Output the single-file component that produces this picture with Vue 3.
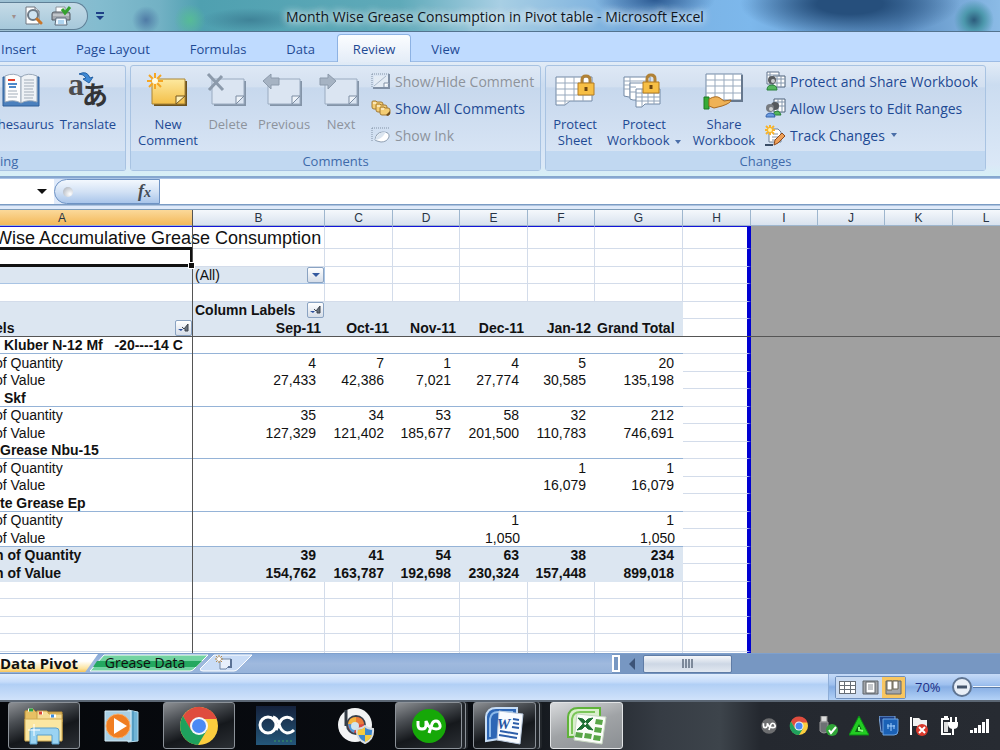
<template>
  <div class="excel">
    <header class="titlebar">
      <div class="quick">
        <span class="quick-dim">▾</span>
        <button class="bare" aria-label="Print preview">
          <svg width="20" height="20" viewBox="0 0 20 20">
            <path d="M3 1h9l4 4v13H3z" fill="#fff" stroke="#707780" />
            <path d="M12 1v4h4" fill="#d5dbe2" stroke="#707780" />
            <circle cx="10" cy="9" r="5" fill="#cfe3f1" stroke="#6d7a86" stroke-width="2" />
            <path d="M14 13l4 4" stroke="#c8762b" stroke-width="3" stroke-linecap="round" />
          </svg>
        </button>
        <button class="bare" aria-label="Quick print">
          <svg width="22" height="20" viewBox="0 0 22 20">
            <path d="M6 1h9v7H6z" fill="#fff" stroke="#8a929b" />
            <path d="M2 8q0-2 2-2h14q2 0 2 2v6H2z" fill="#a3a8ae" stroke="#555b62" />
            <path d="M3 9h16" stroke="#dfe3e6" />
            <path d="M6 12h10l1 7H5z" fill="#eef7ff" stroke="#5c6b7a" />
            <path d="M8 15h6M8 17h6" stroke="#6fb0df" />
            <path d="M12 3l3 4 5-6" fill="none" stroke="#35a12e" stroke-width="3" />
          </svg>
        </button>
      </div>
      <button class="bare customize" aria-label="Customize toolbar">
        <svg width="8" height="8" viewBox="0 0 8 8">
          <path d="M0 1h8" stroke="#1d3f86" stroke-width="2" />
          <path d="M0 4h8L4 8z" fill="#1d3f86" />
        </svg>
      </button>
      <h1 class="window-title">Month Wise Grease Consumption in Pivot table - Microsoft Excel</h1>
    </header>

    <nav class="tabs">
      <button
        v-for="tab in tabs"
        :key="tab"
        class="tab"
        :class="{ active: tab === activeTab }"
        @click="activeTab = tab"
      >
        {{ tab }}
      </button>
    </nav>

    <section class="ribbon">
      <div class="group group-proofing">
        <div class="group-body">
          <button class="big thesaurus">
            <svg width="38" height="36" viewBox="0 0 38 36">
              <path d="M1 4h36v29H1z" fill="#4b80bd" stroke="#2f5f99" />
              <path d="M3 3q9-4 16 1v26q-7-4-16-1z" fill="#fdfdfd" stroke="#9aa9ba" />
              <path d="M35 3q-9-4-16 1v26q7-4 16-1z" fill="#eef2f6" stroke="#9aa9ba" />
              <path d="M6 7h7" stroke="#e2402c" stroke-width="2" />
              <path d="M6 11h9M7 14h7" stroke="#4d88c9" stroke-width="2" />
              <path d="M6 18h9M6 21h10M6 24h9M22 7h10M22 10h10M22 13h10M22 16h9M22 19h10M22 22h10M22 25h9" stroke="#a2adb9" />
            </svg>
            <span>hesaurus</span>
          </button>
          <button class="big translate">
            <svg width="42" height="38" viewBox="0 0 42 38">
              <text x="1" y="23" class="glyph-a">a</text>
              <text x="15" y="33" class="glyph-ja">あ</text>
              <path d="M12 2q8-4 11 4l3-1-4 6-6-4 3-1q-2-4-7-4z" fill="#3f8ad6" stroke="#2361a5" />
            </svg>
            <span>Translate</span>
          </button>
        </div>
        <div class="group-name">ing</div>
      </div>

      <div class="group group-comments">
        <div class="group-body">
          <button class="big new-comment">
            <svg width="42" height="36" viewBox="0 0 42 36">
              <path d="M7 8h33v25H7z" fill="#6b5220" />
              <path d="M5 6h33v25H5z" fill="url(#note)" stroke="#a98536" />
              <path d="M29 31v-8h9z" fill="#fff2ba" stroke="#74571f" />
              <path d="M8 0v16M0 8h16M2 2l12 12M14 2L2 14" stroke="#f5a623" stroke-width="2" />
              <circle cx="8" cy="8" r="3" fill="#fffbe0" />
              <defs>
                <linearGradient id="note" x2="0" y2="1">
                  <stop offset="0" stop-color="#fde9a0" />
                  <stop offset="1" stop-color="#f3bf48" />
                </linearGradient>
              </defs>
            </svg>
            <span>New<br />Comment</span>
          </button>
          <button v-for="item in noteButtons" :key="item.label" class="big" :class="item.cls" disabled>
            <svg width="42" height="36" viewBox="0 0 42 36">
              <path d="M7 8h32v25H7z" fill="#8494a8" />
              <path d="M5 6h32v25H5z" fill="#dbe5f2" stroke="#9aabc0" />
              <path d="M29 31v-8h8z" fill="#eef3f9" stroke="#7c8da3" />
              <path :d="item.mark" :fill="item.fill" stroke="#8c9aab" :stroke-width="item.stroke" />
            </svg>
            <span>{{ item.label }}</span>
          </button>
          <div class="small-list">
            <button class="small" disabled>
              <svg width="20" height="18" viewBox="0 0 20 18">
                <path d="M1 2h17" stroke="#8192a6" stroke-dasharray="1 1" />
                <path d="M1 2v13" stroke="#8192a6" stroke-dasharray="1 1" />
                <path d="M3 4h15v11H3z" fill="#e3ebf4" />
                <path d="M18 2v14H2" fill="none" stroke="#8090a5" stroke-width="2" />
                <path d="M3 14L15 4" stroke="#a9b8ca" />
                <path d="M13 15v-4h5" fill="#fff" stroke="#8090a5" />
              </svg>
              Show/Hide Comment
            </button>
            <button class="small">
              <svg width="20" height="18" viewBox="0 0 20 18">
                <g fill="#f4cd73" stroke="#a37a35">
                  <path d="M1 3q0-1 1-1h3l1 1h4q2 0 2 2v4q0 1-1 1H3q-2 0-2-2z" />
                  <path d="M5 6q0-1 1-1h3l1 1h4q2 0 2 2v4q0 1-1 1H7q-2 0-2-2z" />
                  <path d="M9 9q0-1 1-1h3l1 1h3q2 0 2 2v3q0 2-2 2h-6q-2 0-2-2z" />
                </g>
                <path d="M2 4h3M6 7h3M10 10h3" stroke="#fff" />
                <path d="M15 16l4-4v3l-2 2z" fill="#704d1b" />
              </svg>
              Show All Comments
            </button>
            <button class="small" disabled>
              <svg width="20" height="18" viewBox="0 0 20 18">
                <path d="M1 2h18M1 2v14" fill="none" stroke="#8192a6" stroke-dasharray="1 1" />
                <path d="M4 14q1-8 8-8 7 0 6 5-2 5-8 5l-4-1z" fill="#fff" stroke="#8f9fb2" />
                <path d="M4 14q6 0 11-8-8-1-11 8z" fill="#dbe5f0" />
              </svg>
              Show Ink
            </button>
          </div>
        </div>
        <div class="group-name">Comments</div>
      </div>

      <div class="group group-changes">
        <div class="group-body">
          <button class="big protect-sheet">
            <svg width="42" height="38" viewBox="0 0 42 38">
              <path d="M2 5h36v24H16l-5 4H2z" fill="#fff" stroke="#7289a5" />
              <path d="M2 11h36M2 17h36M2 23h36M2 29h14M11 5v28M20 5v24M29 5v24" stroke="#98a9bd" />
              <g transform="translate(24 2)">
                <path d="M4 10V6q0-4 4-4t4 4v4" fill="none" stroke="#b08136" stroke-width="3" />
                <path d="M0 9h16v12H0z" fill="#f7bf45" stroke="#b27a22" />
                <path d="M8 13v4" stroke="#6c4612" stroke-width="3" />
              </g>
            </svg>
            <span>Protect<br />Sheet</span>
          </button>
          <button class="big protect-book">
            <svg width="42" height="38" viewBox="0 0 42 38">
              <path d="M1 5h26v20H6l-5-1z" fill="#fff" stroke="#7289a5" />
              <path d="M1 9h26M1 13h26M1 17h26M7 5v19" stroke="#98a9bd" />
              <path d="M7 11h26v17H10l-3-1z" fill="#fff" stroke="#7289a5" />
              <path d="M13 17h24v15H22l-3 3h-6z" fill="#fff" stroke="#7289a5" />
              <path d="M7 15h6M7 20h6M13 21h24M13 25h24M13 29h24M19 17v18M25 17v15M31 17v15" stroke="#8fa2b8" />
              <g transform="translate(20 1)">
                <path d="M4 10V6q0-4 4-4t4 4v4" fill="none" stroke="#b08136" stroke-width="3" />
                <path d="M0 9h16v11H0z" fill="#f7bf45" stroke="#b27a22" />
                <path d="M8 12v4" stroke="#6c4612" stroke-width="3" />
              </g>
            </svg>
            <span>Protect<br />Workbook <i class="caret"></i></span>
          </button>
          <button class="big share-book">
            <svg width="42" height="38" viewBox="0 0 42 38">
              <path d="M3 2h36v26H3z" fill="#fff" stroke="#7289a5" />
              <path d="M3 8h36M3 14h36M3 21h36M12 2v26M21 2v26M30 2v26" stroke="#98a9bd" />
              <path d="M39 3v26H27" fill="none" stroke="#66788e" stroke-width="2" />
              <path d="M1 25h5v12H1z" fill="#35ab35" stroke="#1c7a23" />
              <path d="M6 27q7-4 11-1l4 3 7-1q0 3-9 6l-8 2-5-2z" fill="#efb256" stroke="#a86a21" />
            </svg>
            <span>Share<br />Workbook</span>
          </button>
          <div class="small-list changes-list">
            <button class="small">
              <svg width="21" height="20" viewBox="0 0 21 20">
                <path d="M2 1h12v12H2z" fill="#fff" stroke="#62758c" />
                <path d="M8 5h12v11H8z" fill="#fff" stroke="#4d6179" />
                <path d="M2 4h12M5 1v12M8 8h12M8 12h12M12 5v11M16 5v11" stroke="#8497ad" />
                <circle cx="7" cy="9" r="4" fill="#5a5d60" />
                <circle cx="8" cy="10" r="2" fill="#c9ccce" />
                <path d="M2 19q0-5 5-5t5 5z" fill="#55b75d" stroke="#28803a" />
              </svg>
              Protect and Share Workbook
            </button>
            <button class="small">
              <svg width="21" height="20" viewBox="0 0 21 20">
                <path d="M9 1h11v13H9z" fill="#fff" stroke="#4d6179" />
                <path d="M9 4h11M9 8h11M13 1v13M17 1v13" stroke="#8497ad" />
                <circle cx="10" cy="8" r="4" fill="#55595d" />
                <circle cx="5" cy="10" r="4" fill="#777b80" />
                <circle cx="6" cy="11" r="2" fill="#d0d2d4" />
                <path d="M8 17q1-4 4-4t4 4z" fill="#55b75d" stroke="#28803a" />
                <path d="M1 19q0-4 5-4 4 0 4 4z" fill="#6a9be0" stroke="#3562ab" />
              </svg>
              Allow Users to Edit Ranges
            </button>
            <button class="small">
              <svg width="21" height="21" viewBox="0 0 21 21">
                <path d="M4 4h9l3 3v10H4z" fill="#fff" stroke="#718196" />
                <path d="M8 9h5M7 12h6M7 15h5" stroke="#8595a8" />
                <path d="M5 0v10M0 5h10M1 1l8 8M9 1L1 9" stroke="#f7b32b" stroke-width="2" />
                <circle cx="5" cy="5" r="2" fill="#fff3b0" />
                <path d="M17 8l3 3-7 7-4 2 1-5z" fill="#eea058" stroke="#8d4a1d" />
                <path d="M0 20h8" stroke="#3a4d66" stroke-width="2" />
              </svg>
              Track Changes <i class="caret"></i>
            </button>
          </div>
        </div>
        <div class="group-name">Changes</div>
      </div>
    </section>

    <section class="formula-bar">
      <div class="name-box">
        <svg width="10" height="6" viewBox="0 0 10 6"><path d="M0 0h10L5 5z" fill="#111" /></svg>
      </div>
      <div class="fx-pill">
        <span class="knob"></span>
        <span class="fx">f<small>x</small></span>
      </div>
      <input class="formula" type="text" aria-label="Formula bar" />
    </section>

    <main class="sheet">
      <table>
        <colgroup>
          <col v-for="c in columns" :key="c.name" :class="c.cls" />
        </colgroup>
        <thead>
          <tr>
            <th v-for="c in columns" :key="c.name" :class="{ selected: c.name === 'A' }">{{ c.name }}</th>
          </tr>
        </thead>
        <tbody>
          <tr class="title-row">
            <td colspan="2" class="sheet-title">Wise Accumulative Grease Consumption</td>
            <td v-for="n in 5" :key="n"></td>
            <td class="edge"></td>
            <td class="outside" colspan="4" rowspan="25"></td>
          </tr>
          <tr v-for="(row, i) in rows" :key="i" :class="row.kind">
            <td :class="[row.indent, { cursor: i === 0 }]">
              <div class="cell">
                <span>{{ row.label }}</span>
                <button v-if="row.filterA" class="filter" aria-label="Filter rows">
                  <svg width="11" height="10" viewBox="0 0 11 10">
                    <path d="M0 6h5L3 8z" fill="#2a4f9c" />
                    <path d="M4 4l2 2 4-5v7H7V6" fill="#68717c" stroke="#3c444d" />
                  </svg>
                </button>
              </div>
              <i v-if="i === 0" class="handle"></i>
            </td>
            <td v-for="(v, j) in row.values" :key="j" :class="{ left: row.left || v === 'Grand Total' }">
              <div class="cell">
                <span>{{ v }}</span>
                <button v-if="row.filterB && j === 0" class="filter" aria-label="Filter">
                  <svg v-if="row.kind === 'page-filter'" width="8" height="4" viewBox="0 0 8 4">
                    <path d="M0 0h8L4 4z" fill="#33599f" />
                  </svg>
                  <svg v-else width="11" height="10" viewBox="0 0 11 10">
                    <path d="M0 6h5L3 8z" fill="#2a4f9c" />
                    <path d="M4 4l2 2 4-5v7H7V6" fill="#68717c" stroke="#3c444d" />
                  </svg>
                </button>
              </div>
            </td>
            <td class="edge"></td>
          </tr>
        </tbody>
      </table>
      <div class="freeze-v"></div>
      <div class="freeze-h"></div>
    </main>

    <footer class="sheet-tabs">
      <button class="sheet-tab current">Data Pivot</button>
      <button class="sheet-tab green">
        <svg class="shape" width="118" height="18" viewBox="0 0 118 18" preserveAspectRatio="none">
          <path d="M0 17L14 1h104L104 15q-2 2-4 2z" fill="#72d3a1" stroke="#fff" />
          <path d="M7 7h105l-6 6H3z" fill="#24a860" />
        </svg>
        <span>Grease Data</span>
      </button>
      <button class="sheet-tab insert" aria-label="Insert worksheet">
        <svg width="54" height="18" viewBox="0 0 54 18">
          <path d="M0 15L14 1h38L38 15q-2 2-4 2H3q-3 0-3-2z" fill="#c9dcf6" stroke="#fff" />
          <path d="M20 5h11v8h-3l-2 2h-6z" fill="#e8f0fb" stroke="#7388a6" />
          <path d="M31 5v8h-3" fill="none" stroke="#5b7295" stroke-width="2" />
          <path d="M19 1v8M15 5h8M16 2l6 6M22 2l-6 6" stroke="#b98a45" />
          <circle cx="19" cy="5" r="2" fill="#fff" />
        </svg>
      </button>
      <div class="hscroll">
        <span class="splitter"></span>
        <button class="arrow" aria-label="Scroll left">
          <svg width="6" height="12" viewBox="0 0 6 12"><path d="M6 0v12L0 6z" fill="#3d5478" /></svg>
        </button>
        <div class="thumb"><i></i><i></i><i></i><i></i></div>
      </div>
    </footer>

    <section class="status">
      <div class="status-left"></div>
      <div class="status-right">
        <div class="views">
          <button aria-label="Normal view">
            <svg width="17" height="13" viewBox="0 0 17 13">
              <path d="M0 0h17v13H0z" fill="#666d75" />
              <path d="M1 1h4v3H1zM6 1h5v3H6zM12 1h4v3h-4zM1 5h4v3H1zM6 5h5v3H6zM12 5h4v3h-4zM1 9h4v3H1zM6 9h5v3H6zM12 9h4v3h-4z" fill="#fff" />
            </svg>
          </button>
          <button aria-label="Page layout view">
            <svg width="17" height="15" viewBox="0 0 17 15">
              <path d="M1 1h15v13H1z" fill="#a3a6aa" stroke="#5e646b" />
              <path d="M4 2h9v11H4z" fill="#fff" stroke="#5e646b" />
              <path d="M6 5h5M6 7h5M6 9h5" stroke="#888e95" />
            </svg>
          </button>
          <button class="on" aria-label="Page break preview">
            <svg width="17" height="15" viewBox="0 0 17 15">
              <path d="M1 1h15v13H1z" fill="#a3a6aa" stroke="#5e646b" />
              <path d="M2 1h5v9H2zM8 1h5v8H8z" fill="#fff" stroke="#6d6652" />
            </svg>
          </button>
        </div>
        <span class="percent">70%</span>
        <button class="bare zoom-out" aria-label="Zoom out">
          <svg width="22" height="22" viewBox="0 0 22 22">
            <circle cx="11" cy="11" r="9" fill="#e9eff7" stroke="#5f7491" stroke-width="2" />
            <path d="M6 11h10" stroke="#44546b" stroke-width="3" />
          </svg>
        </button>
        <span class="track"></span>
      </div>
    </section>

    <section class="taskbar">
      <button class="task open" aria-label="File Explorer">
        <svg width="42" height="38" viewBox="0 0 42 38">
          <path d="M2 4l8-2 3 3h26v28H2z" fill="#e8c063" stroke="#b98d36" />
          <path d="M14 4h10l2 3h13v8H14z" fill="#f5dc94" stroke="#c79f47" />
          <path d="M5 3h5M16 6h4M27 9h6" stroke="#fff" stroke-width="3" />
          <path d="M6 3h4" stroke="#30a243" stroke-width="3" />
          <path d="M16 6h3" stroke="#db4337" stroke-width="3" />
          <path d="M28 9h3" stroke="#3b8de0" stroke-width="3" />
          <path d="M2 12h37v22H2z" fill="#fbe7a2" stroke="#d2ab53" />
          <path d="M7 37V24q0-3 3-3h23q3 0 3 3v13h-7v-9H14v9z" fill="#9ad3f2" stroke="#5b9fca" />
          <path d="M11 17v12M5 23h12" stroke="#fff" />
        </svg>
      </button>
      <button class="task player" aria-label="Media Player">
        <svg width="36" height="34" viewBox="0 0 36 34">
          <path d="M24 1l10 2v29l-10 1z" fill="#70b4d6" stroke="#b5dcee" />
          <path d="M29 2v30" stroke="#3b86b0" />
          <path d="M1 2h26v30H1z" fill="#a9cfe4" stroke="#d5ebf6" />
          <circle cx="14" cy="17" r="12" fill="#f07e22" stroke="#f6b070" />
          <path d="M10 9v16l13-8z" fill="#fff" />
        </svg>
      </button>
      <button class="task open" aria-label="Chrome">
        <svg width="40" height="40" viewBox="0 0 40 40">
          <circle cx="20" cy="20" r="19" fill="#fbcd3e" />
          <path d="M38 13H20L12 25 4 10A19 19 0 0 1 38 13z" fill="#df4c3e" />
          <path d="M4 10A19 19 0 0 0 19 39l9-15H12z" fill="#1fa15d" />
          <circle cx="20" cy="20" r="9" fill="#f4f6f8" />
          <circle cx="20" cy="20" r="7" fill="#4a8af4" />
        </svg>
      </button>
      <button class="task oc" aria-label="OC">
        <svg width="40" height="39" viewBox="0 0 40 39">
          <defs>
            <linearGradient id="oc" x2="0" y2="1">
              <stop offset="0" stop-color="#15223c" />
              <stop offset="1" stop-color="#24577a" />
            </linearGradient>
          </defs>
          <path d="M0 0h40v39H0z" fill="url(#oc)" />
          <circle cx="12" cy="19" r="8" fill="none" stroke="#fff" stroke-width="3" />
          <path d="M17 11q4 1 6 7 2 8 8 9 4 0 7-3M37 14q-4-4-9-2-3 1-5 6l-3 6" fill="none" stroke="#fff" stroke-width="3" />
          <path d="M18 35h19" stroke="#3c9b61" stroke-dasharray="2 2" />
        </svg>
      </button>
      <button class="task camera" aria-label="Camera">
        <svg width="38" height="38" viewBox="0 0 38 38">
          <circle cx="18" cy="18" r="17" fill="#f3f4f5" />
          <path d="M9 3v16" stroke="#323b45" stroke-width="3" />
          <circle cx="19" cy="18" r="10" fill="#39424c" />
          <circle cx="19" cy="18" r="8" fill="#d94740" />
          <path d="M19 18l-8-1q1-7 8-7z" fill="#f4b43c" />
          <path d="M19 18v-8q7 0 8 7z" fill="#e97c3c" />
          <path d="M19 18l-8-1q1 7 6 9z" fill="#4d98d9" />
          <circle cx="18" cy="19" r="4" fill="#d1e5ee" />
          <path d="M20 22q5 0 8-3 3 3 8 3 1 10-8 14-9-4-8-14z" fill="#3f87cd" stroke="#d9dde0" stroke-width="2" />
          <path d="M28 20v8h-7q-1-2 0-5 4 0 7-3zM28 28h7q-2 5-7 7z" fill="#f5cb42" />
        </svg>
      </button>
      <button class="task open stack" aria-label="Upwork">
        <svg width="36" height="36" viewBox="0 0 36 36">
          <circle cx="18" cy="18" r="17" fill="#16a808" />
          <path d="M7 13v4q0 4 4 4t4-4v-4q2 5 5 8M18 25l3-9q1-3 4-3t4 4-4 4q-3 0-5-2" fill="none" stroke="#fff" stroke-width="3" />
        </svg>
      </button>
      <button class="task open stack word" aria-label="Word">
        <svg width="40" height="38" viewBox="0 0 40 38">
          <path d="M1 34V10Q2 1 11 1h21v28z" fill="#2d66b5" stroke="#c7ddf5" stroke-width="2" />
          <path d="M5 30V12q1-7 8-7h15" fill="none" stroke="#8bb9e9" stroke-width="2" />
          <path d="M14 4l24 3-3 30-23-4z" fill="#f8fbff" stroke="#b8c8dc" />
          <text x="12" y="22" class="word-w">W</text>
          <path d="M28 12l6 1M28 16l6 1M27 20l7 1M15 24l18 3M14 28l18 3" stroke="#2c5da9" stroke-width="2" />
        </svg>
      </button>
      <button class="task open bright" aria-label="Excel">
        <svg width="40" height="38" viewBox="0 0 40 38">
          <path d="M1 30V10Q2 1 11 1h22v28z" fill="#d9efcb" stroke="#5fb33a" stroke-width="2" />
          <path d="M5 27V12q1-7 8-7h15" fill="none" stroke="#7cc65a" stroke-width="2" />
          <path d="M10 7l29 3-4 27-28-4z" fill="#fafdf8" stroke="#c7d6c2" />
          <path d="M29 12l7 1-1 5-7-1zM28 20l7 1-1 5-7-1zM27 28l7 1-1 5-7-1zM18 26l7 1-1 5-7-1zM9 25l7 1-1 5-7-1z" fill="#59a647" />
          <path d="M11 11l5 1 10 11-5-1zM26 11l-5 1-11 11 5-1z" fill="#1f7034" stroke="#1f7034" />
        </svg>
      </button>
      <div class="tray">
        <svg width="20" height="20" viewBox="0 0 36 36">
          <circle cx="18" cy="18" r="14" fill="#6d6e70" />
          <path d="M8 13v4q0 4 3 4t4-4v-4q2 5 5 8M18 25l3-9q1-3 4-3t4 4-4 4q-3 0-5-2" fill="none" stroke="#fff" stroke-width="3" />
        </svg>
        <svg width="20" height="20" viewBox="0 0 40 40">
          <circle cx="20" cy="20" r="18" fill="#fbcd3e" />
          <path d="M37 13H20L12 25 4 11A18 18 0 0 1 37 13z" fill="#df4c3e" />
          <path d="M4 11A18 18 0 0 0 20 38l8-13H12z" fill="#1fa15d" />
          <circle cx="20" cy="20" r="9" fill="#f4f6f8" />
          <circle cx="20" cy="20" r="7" fill="#4a8af4" />
        </svg>
        <svg width="20" height="20" viewBox="0 0 20 20">
          <path d="M2 0h6v6H2z" fill="#ddd" stroke="#888" />
          <path d="M1 6h8v9q-4 4-8 0z" fill="#6d7174" stroke="#999" />
          <circle cx="13" cy="14" r="6" fill="#2fa437" />
          <path d="M10 14l2 3 5-6" fill="none" stroke="#fff" stroke-width="2" />
        </svg>
        <svg width="20" height="20" viewBox="0 0 20 20">
          <path d="M10 0l10 19H0z" fill="#22cc22" stroke="#0a8a15" />
          <path d="M10 8l-4 8h8z" fill="#0b6612" />
          <path d="M10 11v3l4 1" fill="none" stroke="#8bff7e" stroke-width="2" />
        </svg>
        <svg width="20" height="20" viewBox="0 0 20 20">
          <path d="M0 0h16v16H2z" fill="#1b3f86" stroke="#7ea8da" />
          <path d="M4 3h15v12q0 4-4 4H4z" fill="#1a61b6" stroke="#6fa5e1" />
          <path d="M9 8v5M12 7v8M15 9v4M8 10h8" stroke="#9fd0ff" />
        </svg>
        <svg width="20" height="20" viewBox="0 0 20 20">
          <path d="M2 1v18" stroke="#fff" stroke-width="2" />
          <path d="M4 2h6l2 2h6v8H9L8 10H4z" fill="#f2f2f2" />
          <circle cx="13" cy="14" r="6" fill="#d9382b" />
          <path d="M10 11l6 6M16 11l-6 6" stroke="#fff" stroke-width="2" />
        </svg>
        <svg width="20" height="20" viewBox="0 0 20 20">
          <path d="M10 3H3v15h9M5 1h4" fill="none" stroke="#fff" stroke-width="2" />
          <path d="M5 6h4v10H5z" fill="#ddd" />
          <path d="M12 1v5M17 1v5" stroke="#fff" stroke-width="2" />
          <path d="M9 6h10v3q0 4-5 4-4 0-5-4z" fill="#fff" />
          <path d="M14 12v7" stroke="#fff" stroke-width="2" />
        </svg>
        <svg width="20" height="20" viewBox="0 0 20 20">
          <path d="M1 14h3v3H1zM5 12h3v5H5zM9 9h3v8H9zM13 6h3v11h-3zM17 3h3v14h-3z" fill="#fff" />
        </svg>
      </div>
    </section>
  </div>
</template>

<script setup>
import { ref } from "vue";

const tabs = ["Insert", "Page Layout", "Formulas", "Data", "Review", "View"];
const activeTab = ref("Review");

const noteButtons = [
  { label: "Delete", cls: "delete", mark: "M1 1l15 16M15 3L2 17", fill: "none", stroke: 3 },
  { label: "Previous", cls: "previous", mark: "M0 8l8-7v4h8v7H8v4z", fill: "#a6b3c3", stroke: 1 },
  { label: "Next", cls: "next", mark: "M16 8L8 1v4H0v7h8v4z", fill: "#a6b3c3", stroke: 1 },
];

const columns = [
  { name: "A", cls: "col-a" },
  { name: "B", cls: "col-b" },
  { name: "C", cls: "col-wide" },
  { name: "D", cls: "col-std" },
  { name: "E", cls: "col-wide" },
  { name: "F", cls: "col-std" },
  { name: "G", cls: "col-g" },
  { name: "H", cls: "col-wide" },
  { name: "I", cls: "col-std" },
  { name: "J", cls: "col-std" },
  { name: "K", cls: "col-wide" },
  { name: "L", cls: "col-std" },
];

const empty = ["", "", "", "", "", ""];
const blank = { label: "", kind: "blank", values: empty };

const rows = [
  blank,
  { label: "", kind: "page-filter", left: true, filterB: true, values: ["(All)", "", "", "", "", ""] },
  blank,
  { label: "", kind: "head", left: true, filterB: true, values: ["Column Labels", "", "", "", "", ""] },
  {
    label: "els",
    kind: "head dates",
    indent: "cut",
    filterA: true,
    values: ["Sep-11", "Oct-11", "Nov-11", "Dec-11", "Jan-12", "Grand Total"],
  },
  { label: "Kluber N-12 Mf   -20----14 C", kind: "item", indent: "deep", values: empty },
  { label: "of Quantity", kind: "data", indent: "cut", values: ["4", "7", "1", "4", "5", "20"] },
  {
    label: "of Value",
    kind: "data",
    indent: "cut",
    values: ["27,433", "42,386", "7,021", "27,774", "30,585", "135,198"],
  },
  { label: "Skf", kind: "item", indent: "deep", values: empty },
  { label: "of Quantity", kind: "data", indent: "cut", values: ["35", "34", "53", "58", "32", "212"] },
  {
    label: "of Value",
    kind: "data",
    indent: "cut",
    values: ["127,329", "121,402", "185,677", "201,500", "110,783", "746,691"],
  },
  { label: "Grease Nbu-15", kind: "item", values: empty },
  { label: "of Quantity", kind: "data", indent: "cut", values: ["", "", "", "", "1", "1"] },
  { label: "of Value", kind: "data", indent: "cut", values: ["", "", "", "", "16,079", "16,079"] },
  { label: "te Grease Ep", kind: "item", values: empty },
  { label: "of Quantity", kind: "data", indent: "cut", values: ["", "", "", "1", "", "1"] },
  { label: "of Value", kind: "data last", indent: "cut", values: ["", "", "", "1,050", "", "1,050"] },
  { label: "n of Quantity", kind: "total", indent: "cut", values: ["39", "41", "54", "63", "38", "234"] },
  {
    label: "n of Value",
    kind: "total",
    indent: "cut",
    values: ["154,762", "163,787", "192,698", "230,324", "157,448", "899,018"],
  },
  blank,
  blank,
  blank,
  blank,
  blank,
];
</script>

<style>
body {
  margin: 0;
}
</style>

<style scoped>
.excel {
  display: flex;
  flex-direction: column;
  height: 100vh;
  overflow: hidden;
  background: #bfdbff;
  font-family: "Open Sans", "Noto Sans", sans-serif;
  font-size: 13px;
  color: #1e4a94;
}

button {
  font: inherit;
  color: inherit;
  background: none;
  border: none;
  padding: 0;
  cursor: pointer;
}

.bare {
  display: flex;
}

/* title bar */
.titlebar {
  display: flex;
  align-items: center;
  flex-shrink: 0;
  height: 32px;
  box-sizing: border-box;
  border-bottom: 1px solid #53738f;
  background:
    radial-gradient(circle at 146px 20px, #4f7ba6 0, transparent 14px),
    radial-gradient(circle at 190px 20px, #56bb96 0, transparent 16px),
    radial-gradient(ellipse 50px 12px at 250px 20px, #3f8398 0, transparent 100%),
    radial-gradient(circle at 974px 20px, #2c5c7c 0, #4c98ac 10px, transparent 20px),
    radial-gradient(ellipse 110px 34px at 850px 4px, #264f7c 30%, transparent 100%),
    radial-gradient(ellipse 60px 20px at 655px 0, #2d5b93 0, transparent 100%),
    linear-gradient(90deg, #9fc0d3 0, #83bccf 100px, #72b1c4 160px, #4fa0b0 200px, #5faab9 400px, #a8cfe4 500px, #78aede 620px, #7db8ec 750px, #5d90c4 900px, #8bbbe6);
}

.quick {
  display: flex;
  align-items: center;
  gap: 7px;
  width: 88px;
  height: 28px;
  box-sizing: border-box;
  padding-left: 12px;
  border: 1px solid #5f7f96;
  border-left: none;
  border-radius: 0 14px 14px 0;
  background: linear-gradient(#c5dbe7, #a6c8da);
}

.quick-dim {
  font-size: 8px;
  color: #a08f8c;
}

.customize {
  margin-left: 8px;
}

.window-title {
  flex: 1;
  margin: 0 0 0 182px;
  padding-top: 2px;
  font-size: 14px;
  font-weight: 400;
  line-height: 20px;
  white-space: nowrap;
  color: #10161d;
  text-shadow: 0 0 8px #fff, 0 0 8px #fff;
}

/* ribbon tabs */
.tabs {
  display: flex;
  flex-shrink: 0;
  height: 30px;
  padding-top: 2px;
  box-sizing: border-box;
  border-bottom: 1px solid #9dbce5;
  background: #bfdbff;
}

.tab {
  padding: 0 19px;
  height: 29px;
  box-sizing: border-box;
  border: 1px solid transparent;
  border-bottom: none;
  white-space: nowrap;
}

.tab:first-child {
  padding-left: 0;
}

.tab.active {
  padding: 0 15px;
  margin-left: 2px;
  border-color: #8db2e3;
  border-radius: 4px 4px 0 0;
  background: linear-gradient(#fbfdff, #e3ecf7);
}

/* ribbon */
.ribbon {
  display: flex;
  flex-shrink: 0;
  gap: 4px;
  padding: 3px 0 5px;
  border-bottom: 2px solid #86a7cf;
  background: linear-gradient(#e2ecf7, #cbdcf0 20%, #dbe8f7 90%, #d6f0f6);
}

.group {
  display: flex;
  flex-direction: column;
  height: 106px;
  box-sizing: border-box;
  border: 1px solid #a8c3e2;
  border-radius: 3px;
  background: linear-gradient(#dee8f5, #d3e0f0 20%, #c7d8ed 21%, #dbe7f6);
}

.group-proofing {
  width: 126px;
  border-left: none;
  border-radius: 0 3px 3px 0;
}

.group-comments {
  width: 411px;
}

.group-changes {
  width: 441px;
}

.group-body {
  display: flex;
  flex: 1;
}

.group-name {
  height: 19px;
  line-height: 20px;
  text-align: center;
  color: #3e6aaa;
  background: #c1d8f1;
}

.group-proofing .group-name {
  text-align: left;
}

.big {
  display: flex;
  flex-direction: column;
  align-items: center;
  flex-shrink: 0;
  padding-top: 6px;
  line-height: 16px;
  white-space: nowrap;
}

.big svg {
  height: 38px;
  margin-bottom: 6px;
  overflow: visible;
}

.big:disabled,
.small:disabled {
  color: #8d939c;
}

.thesaurus {
  width: 54px;
  align-items: flex-end;
}

.thesaurus svg {
  margin-right: 14px;
}

.translate {
  width: 68px;
}

.new-comment {
  width: 74px;
}

.delete {
  width: 46px;
}

.previous {
  width: 66px;
}

.next {
  width: 48px;
}

.protect-sheet {
  width: 58px;
}

.protect-book {
  width: 80px;
}

.share-book {
  width: 80px;
}

.glyph-a {
  font: bold 32px "Liberation Serif", serif;
  fill: #4d4d4f;
}

.glyph-ja {
  font: bold 26px "Noto Sans CJK JP", sans-serif;
  fill: #333436;
}

.small-list {
  display: flex;
  flex-direction: column;
  gap: 7px;
  padding-top: 5px;
  padding-left: 6px;
  font-size: 14px;
}

.changes-list {
  padding-left: 1px;
}

.small {
  display: flex;
  align-items: center;
  gap: 4px;
  height: 20px;
  white-space: nowrap;
}

.caret {
  display: inline-block;
  margin-left: 2px;
  border: 3px solid transparent;
  border-top: 4px solid #4a6ea8;
  border-bottom: none;
  vertical-align: middle;
}

/* formula bar */
.formula-bar {
  display: flex;
  flex-shrink: 0;
  height: 32px;
  box-sizing: border-box;
  padding: 1px 0 5px;
  border-bottom: 1px solid #7f9db9;
  background: linear-gradient(#a9c4e6 0 1px, #dfeafa 1px 26px, #7b9cc4 26px 27px, #dfeafa 28px);
}

.name-box {
  display: flex;
  align-items: center;
  justify-content: flex-end;
  width: 54px;
  padding-right: 7px;
  box-sizing: border-box;
  background: #fff;
}

.fx-pill {
  display: flex;
  align-items: center;
  justify-content: space-between;
  width: 106px;
  padding: 0 8px;
  box-sizing: border-box;
  border: 1px solid #6e93c4;
  border-radius: 13px 0 0 13px;
  background: linear-gradient(#f3f8fe, #d3e2f5 50%, #a9c5ea);
}

.knob {
  width: 10px;
  height: 10px;
  border-radius: 50%;
  background: radial-gradient(circle at 7px 7px, #fff, #a4abb5);
}

.fx {
  font: italic bold 18px "Liberation Serif", serif;
  color: #444b55;
}

.fx small {
  font-size: 14px;
}

.formula {
  flex: 1;
  min-width: 0;
  border: none;
  padding: 0 4px;
  background: #fff;
}

/* sheet */
.sheet {
  position: relative;
  flex: 1;
  min-height: 0;
  overflow: hidden;
  background: #a0a0a0;
  font-family: "Liberation Sans", Arial, sans-serif;
  font-size: 14px;
  color: #111;
}

table {
  width: 1029px;
  margin-left: -9px;
  table-layout: fixed;
  border-collapse: separate;
  border-spacing: 0;
}

.col-a {
  width: 202px;
}

.col-b {
  width: 132px;
}

.col-wide {
  width: 68px;
}

.col-std {
  width: 67px;
}

.col-g {
  width: 88px;
}

th {
  height: 16px;
  box-sizing: border-box;
  padding: 0;
  border-right: 1px solid #9eb6ce;
  border-bottom: 1px solid #9eb6ce;
  font-size: 12px;
  font-weight: 400;
  line-height: 14px;
  color: #273445;
  background: linear-gradient(#f5f8fc, #d8e2ee);
}

/* the column runs off the left side, so its letter sits left of centre */
th.selected {
  padding-right: 59px;
  background: linear-gradient(#fbd99a, #f3b95a);
}

td {
  height: 17px;
  box-sizing: border-box;
  padding: 0;
  border-right: 1px solid #d3dcea;
  border-bottom: 1px solid #d3dcea;
  background: #fff;
  line-height: 16px;
  text-align: right;
  white-space: pre;
}

tr:nth-child(even) td {
  height: 18px;
}

.title-row td {
  height: 23px;
  border-top: 1px solid #1414d8;
}

.sheet-title {
  text-align: left;
  font-size: 18px;
  line-height: 20px;
}

.cell {
  display: flex;
  align-items: center;
  justify-content: flex-end;
  height: 16px;
}

td:first-child .cell,
td.left .cell {
  justify-content: space-between;
}

td:first-child {
  padding-left: 9px;
}

td.sheet-title {
  padding-left: 4px;
}

td.cut {
  padding-left: 4px;
}

td.deep {
  padding-left: 13px;
}

td.edge,
.title-row td.edge {
  border-right: 4px solid #0000d2;
}

td.outside,
.title-row td.outside {
  border: none;
  background: #a0a0a0;
}

.left .cell {
  padding-left: 2px;
}

.page-filter td:nth-child(-n + 2) {
  border-color: #a9c4e4;
  background: #dce6f1;
}

.head td:not(.edge) {
  border-color: transparent;
  font-weight: 700;
  background: #dce6f1;
}

.dates td:not(.left):not(.edge):not(:first-child) .cell {
  padding-right: 3px;
}

.item td:not(.edge) {
  border-right: none;
  border-bottom-color: #95b3d7;
  font-weight: 700;
}

.data td:not(.edge) {
  border-color: transparent;
}

.data.last td:not(.edge) {
  border-right: none;
  border-bottom-color: #95b3d7;
}

.total td:not(.edge) {
  border-color: transparent;
  font-weight: 700;
  background: #dce6f1;
}

.data td:not(.edge) .cell,
.total td:not(.edge) .cell {
  padding-right: 8px;
}

.filter {
  display: flex;
  align-items: center;
  justify-content: center;
  width: 17px;
  height: 16px;
  box-sizing: border-box;
  border: 1px solid #8aa3c2;
  border-radius: 2px;
  background: linear-gradient(#fff, #d5dde8);
}

td.cursor {
  position: relative;
}

td.cursor::after {
  content: "";
  position: absolute;
  inset: -2px -1px -1px -3px;
  border: 3px solid #111;
}

.handle {
  position: absolute;
  z-index: 2;
  right: -3px;
  bottom: -3px;
  width: 5px;
  height: 5px;
  border: 1px solid #fff;
  background: #111;
}

.freeze-v {
  position: absolute;
  top: 0;
  bottom: 0;
  left: 192px;
  width: 1px;
  background: #555;
}

.freeze-h {
  position: absolute;
  top: 126px;
  left: 0;
  right: 0;
  height: 1px;
  background: #555;
}

/* sheet tabs */
.sheet-tabs {
  display: flex;
  flex-shrink: 0;
  height: 21px;
  box-sizing: border-box;
  border-top: 1px solid #7fa0cc;
  border-bottom: 1px solid #7393bf;
  background: linear-gradient(#89abd8, #9fb9de 50%, #96b3da);
  color: #111;
}

.sheet-tab {
  display: flex;
  align-items: center;
  height: 18px;
  line-height: 18px;
  white-space: nowrap;
}

.sheet-tab.current {
  width: 98px;
  font-size: 15px;
  font-weight: 700;
  background: linear-gradient(#fff 40%, #fce4a0 80%, #f8c55c);
  clip-path: polygon(0 0, 100% 0, 87% 100%, 0 100%);
}

.green {
  position: relative;
  justify-content: center;
  width: 118px;
  margin-left: -8px;
  padding-right: 8px;
  box-sizing: border-box;
  font-size: 14px;
}

.green span {
  position: relative;
}

.shape {
  position: absolute;
  left: 0;
  top: 0;
}

.insert {
  margin-left: -8px;
}

.hscroll {
  display: flex;
  align-items: center;
  flex: 0 0 388px;
  margin-left: auto;
  background: #7797c2;
}

.splitter {
  width: 8px;
  height: 17px;
  box-sizing: border-box;
  border: 2px solid #fff;
  background: #7797c2;
}

.arrow {
  display: flex;
  justify-content: center;
  width: 23px;
}

.thumb {
  display: flex;
  align-items: center;
  justify-content: center;
  gap: 1px;
  width: 89px;
  height: 18px;
  box-sizing: border-box;
  border: 1px solid #5f7ca6;
  border-radius: 2px;
  background: linear-gradient(#f6f8fb, #cdd7e5 50%, #e1e8f1);
}

.thumb i {
  width: 2px;
  height: 9px;
  background: #7d899a;
}

/* status bar */
.status {
  display: flex;
  flex-shrink: 0;
  height: 26px;
}

.status-left {
  flex: 1;
  border-right: 1px solid #8eaed8;
  background: linear-gradient(#e0edfd, #c6dcfa 30%, #b1cff5 40%, #d0e2fa);
}

.status-right {
  display: flex;
  align-items: center;
  width: 171px;
  box-sizing: border-box;
  padding-left: 6px;
  background: linear-gradient(#c6dbf7, #9fc1ef 40%, #86aee4 50%, #b4d2f7);
}

.views {
  display: flex;
  border: 1px solid #6f8fbc;
  border-radius: 2px;
}

.views button {
  display: flex;
  align-items: center;
  justify-content: center;
  width: 23px;
  height: 21px;
  background: #cadbf2;
}

.views .on {
  background: #f8c660;
}

.percent {
  width: 46px;
  padding-left: 9px;
  box-sizing: border-box;
  color: #1d2f86;
}

.zoom-out {
  margin-left: -1px;
}

.track {
  flex: 1;
  height: 1px;
  background: #eef4fb;
  border-bottom: 1px solid #587aa8;
}

/* taskbar */
.taskbar {
  display: flex;
  align-items: flex-start;
  flex-shrink: 0;
  height: 50px;
  padding-left: 8px;
  box-sizing: border-box;
  border-top: 2px solid #5b6673;
  background: linear-gradient(90deg, #05070b 0, #0a0d12 500px, #363c44 660px, #3d444b 720px, #24282f 760px, #272b32);
}

.task {
  display: flex;
  align-items: center;
  justify-content: center;
  flex-shrink: 0;
  height: 47px;
  box-sizing: border-box;
}

.task.open {
  width: 72px;
  border: 1px solid #8c9299;
  border-radius: 3px;
  background: linear-gradient(160deg, #8d9094, #4b4f54 30%, #15181c 60%, #2b2f34);
}

.task.stack {
  width: 67px;
  margin-right: 11px;
  box-shadow: 3px 0 0 #22262b, 4px 0 0 #8c9299, 6px 0 0 #22262b;
}

.task.word {
  width: 63px;
  margin-right: 14px;
}

.task.bright {
  width: 73px;
  border-color: #e2e4e6;
  background: linear-gradient(160deg, #d8dadc, #a0a3a6 50%, #8b8f93);
}

.player {
  width: 83px;
}

.oc {
  width: 81px;
}

.camera {
  width: 79px;
}

.word-w {
  font: italic bold 15px "Liberation Serif", serif;
  fill: #2453a0;
}

.tray {
  display: flex;
  align-items: center;
  gap: 10px;
  height: 47px;
  margin-left: auto;
  padding-right: 11px;
}
</style>
